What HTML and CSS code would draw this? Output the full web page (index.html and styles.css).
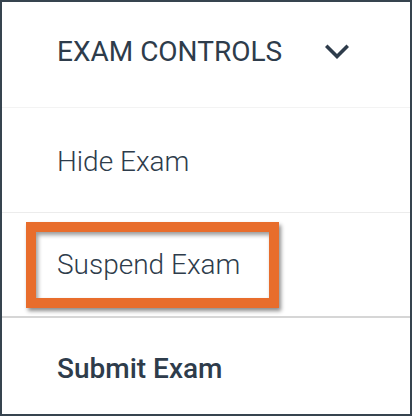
FILE: index.html
```html
<!DOCTYPE html>
<html>
<head>
<meta charset="utf-8">
<link rel="stylesheet" href="styles.css">
</head>
<body>
<div class="panel">
  <div class="header">
    <span class="title">EXAM CONTROLS</span>
    <svg class="chevron" width="24" height="16" viewBox="0 0 24 16"><path d="M2.5 3 L12 12.5 L21.5 3" fill="none" stroke="#2e3c4b" stroke-width="3.6" stroke-linecap="square"/></svg>
  </div>
  <div class="row row-hide"><span class="item">Hide Exam</span></div>
  <div class="row row-suspend">
    <span class="item">Suspend Exam</span>
    <div class="highlight"></div>
  </div>
  <div class="row row-submit"><span class="item bold">Submit Exam</span></div>
</div>
</body>
</html>
```
FILE: styles.css
```css
html, body {
  margin: 0;
  padding: 0;
  background: #ffffff;
}
.panel {
  box-sizing: border-box;
  width: 412px;
  height: 416px;
  border: 2px solid #36444f;
  font-family: Roboto, "Liberation Sans", sans-serif;
  color: #2e3c4b;
  display: flex;
  flex-direction: column;
  overflow: hidden;
}
.header {
  box-sizing: border-box;
  height: 106px;
  padding: 0 0 6px 55px;
  display: flex;
  align-items: center;
  border-bottom: 1px solid #f3f3f3;
}
.title {
  font-size: 28px;
  font-weight: 400;
  line-height: 1;
}
.chevron {
  margin-left: 43px;
  margin-top: 1px;
}
.row {
  box-sizing: border-box;
  display: flex;
  align-items: center;
  padding-left: 55px;
}
.item {
  font-size: 28px;
  font-weight: 300;
  line-height: 1;
}
.item.bold {
  font-weight: 500;
}
.row-hide {
  height: 105px;
  padding-top: 4px;
  border-bottom: 1px solid #ececec;
}
.row-suspend {
  position: relative;
  height: 105px;
  border-bottom: 2px solid #d6d6d6;
}
.row-submit {
  flex: 1;
  padding-top: 5px;
}
.highlight {
  position: absolute;
  left: 24px;
  top: 9px;
  width: 253px;
  height: 86px;
  box-sizing: border-box;
  border: 10px solid #e86d2c;
  box-shadow: 2px 3px 4px rgba(0,0,0,0.45), inset 2px 3px 4px rgba(0,0,0,0.4);
}
```
